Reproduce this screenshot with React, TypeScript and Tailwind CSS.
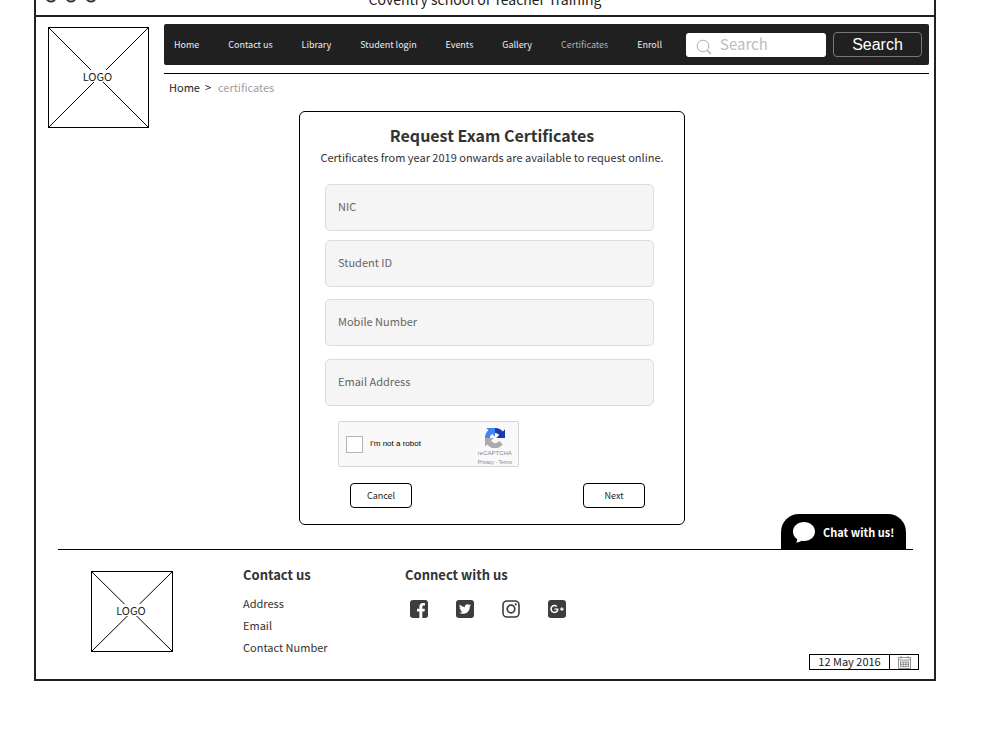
import React from "react";
import { FaFacebookF, FaTwitter, FaGooglePlusG } from "react-icons/fa";

const navItems = ["Home", "Contact us", "Library", "Student login", "Events", "Gallery", "Certificates", "Enroll"];

function Logo({ className }: { className: string }) {
  return (
    <div className={"relative flex shrink-0 items-center justify-center border border-black pr-[2px] pb-1 " + className}>
      <svg className="absolute inset-0 h-full w-full" viewBox="0 0 100 100" preserveAspectRatio="none" aria-hidden="true">
        <path d="M0 0L100 100M100 0L0 100" stroke="#000" strokeWidth="1" vectorEffect="non-scaling-stroke" />
      </svg>
      <span className="relative bg-white text-[11px] leading-3 text-[#222]">LOGO</span>
    </div>
  );
}

function Field({ id, label, type = "text" }: { id: string; label: string; type?: string }) {
  return (
    <input
      id={id}
      type={type}
      aria-label={label}
      placeholder={label}
      className="h-[47px] w-full rounded-[5px] border border-[#dcdcdc] bg-[#f5f5f5] px-3 pb-1 text-[11px] text-[#333] placeholder:text-[#666]"
    />
  );
}

function CaptchaMark() {
  return (
    <svg className="h-5 w-5" viewBox="0 0 64 64" aria-hidden="true">
      <path d="M64 32V4l-7 7A32 32 0 0 0 32 0v16c7 0 11 3 13 7l-9 9z" fill="#1c3aa9" />
      <path d="M32 0H4l7 7A32 32 0 0 0 0 32h16c0-7 3-11 7-13l9 9z" fill="#4285f4" />
      <path d="M0 32v28l7-7a32 32 0 0 0 50 0L45 41c-5 10-19 10-25 0l8-9z" fill="#ababab" />
    </svg>
  );
}

function InstagramMark() {
  return (
    <svg className="h-[18px] w-[18px]" viewBox="0 0 18 18" fill="none" stroke="#3d3d3d" aria-hidden="true">
      <rect x="1" y="1" width="16" height="16" rx="4" strokeWidth="1.6" />
      <circle cx="9" cy="9" r="3.8" strokeWidth="1.7" />
      <circle cx="13.7" cy="4.3" r="1.1" fill="#3d3d3d" stroke="none" />
    </svg>
  );
}

const tile = "flex h-[18px] w-[18px] justify-center rounded-[3px] bg-[#3d3d3d] text-white";

export default function App() {
  return (
    <div className="min-h-screen bg-white pr-16 pl-[34px] font-['Noto_Sans_CJK_SC','Noto_Sans',sans-serif] text-[#333]">
      <div className="border-2 border-t-0 border-[#222]">
        <header className="relative flex h-[17px] items-end justify-center overflow-hidden border-b-2 border-[#222]">
          <svg className="absolute top-0 left-0 h-4 w-20" viewBox="0 0 80 16" fill="none" stroke="#333" strokeWidth="2" aria-hidden="true">
            <circle cx="15" cy="-3" r="4.6" />
            <circle cx="35" cy="-3" r="4.6" />
            <circle cx="55" cy="-3" r="4.6" />
          </svg>
          <h1 className="mb-1 text-[14px] leading-6 text-[#222]">Coventry school of Teacher Training</h1>
        </header>

        <div className="flex items-start gap-[15px] pt-[7px] pr-[5px] pl-3">
          <Logo className="mt-[3px] h-[101px] w-[101px]" />
          <div className="min-w-0 flex-1">
            <nav className="flex h-[41px] items-center rounded-[2px] bg-[#202020] pr-[7px] pl-[10px]">
              <ul className="mr-6 flex flex-1 justify-between text-[9px] leading-4 whitespace-nowrap text-[#eee]">
                {navItems.map((item) => (
                  <li key={item}>
                    <a href="#" className={item === "Certificates" ? "text-[#b0b0b0]" : ""}>{item}</a>
                  </li>
                ))}
              </ul>
              <label className="flex h-6 w-[140px] items-center rounded-[3px] bg-white pl-[10px]">
                <svg className="mt-1 h-4 w-4 shrink-0" viewBox="0 0 16 16" fill="none" stroke="#b0b0b0" aria-hidden="true">
                  <circle cx="7" cy="7" r="5.8" />
                  <path d="M11.2 11.2L15 15" strokeWidth="1.5" />
                </svg>
                <input type="search" aria-label="Search" placeholder="Search" className="ml-2 h-6 w-full min-w-0 bg-transparent pb-[2px] text-[15px] leading-[22px] placeholder:text-[#bdbdbd]" />
              </label>
              <button type="button" className="ml-[7px] h-[25px] w-[89px] rounded-[4px] border border-[#777] font-['Liberation_Sans',sans-serif] text-base leading-5 text-white">Search</button>
            </nav>
            <div className="mt-2 border-t border-black" />
            <div className="mt-[3px] flex gap-[7px] pl-[5px] text-[11px] leading-5">
              <a href="#" className="text-[#222]">Home&nbsp; &gt;</a>
              <span className="text-[#a0a0a0]">certificates</span>
            </div>

            <main className="mt-[14px] ml-[135px] w-[386px] rounded-[6px] border border-black pt-[11px] pb-4">
              <h2 className="text-center text-[16px] leading-6 font-bold">Request Exam Certificates</h2>
              <p className="text-center text-[11px] leading-5 whitespace-nowrap">Certificates from year 2019 onwards are available to request online.</p>
              <form className="mt-[17px] pr-[30px] pl-[25px]">
                <div className="flex flex-col gap-3">
                  <div className="flex flex-col gap-[9px]">
                    <Field id="nic" label="NIC" />
                    <Field id="student" label="Student ID" />
                  </div>
                  <div className="flex flex-col gap-[13px]">
                    <Field id="mobile" label="Mobile Number" type="tel" />
                    <Field id="email" label="Email Address" type="email" />
                  </div>
                </div>
                <div className="mt-[15px] ml-[13px] flex h-[46px] w-[181px] items-center rounded-[2px] border border-[#d6d6d6] bg-[#f9f9f9] pr-[6px] pl-[7px]">
                  <input id="robot" type="checkbox" className="h-[17px] w-[17px] appearance-none border border-[#b5b5b5] bg-white" />
                  <label htmlFor="robot" className="ml-[7px] font-['Liberation_Sans',sans-serif] text-[8px] leading-3 text-black">I'm not a robot</label>
                  <div className="ml-auto flex flex-col items-center pt-1 font-['Liberation_Sans',sans-serif] whitespace-nowrap text-[#888]">
                    <CaptchaMark />
                    <span className="mt-[2px] text-[6px] leading-[6px]">reCAPTCHA</span>
                    <span className="mt-[3px] text-[5px] leading-[6px]">Privacy - Terms</span>
                  </div>
                </div>
                <div className="mt-4 flex justify-between pr-[9px] pl-[25px] text-[9px] leading-4 text-[#222]">
                  <button type="button" className="h-[25px] w-[62px] rounded-[4px] border border-black">Cancel</button>
                  <button type="button" className="h-[25px] w-[62px] rounded-[4px] border border-black">Next</button>
                </div>
              </form>
            </main>
          </div>
        </div>

        <footer className="relative mt-6">
          <button type="button" className="absolute right-7 bottom-full flex h-[35px] w-[125px] items-center rounded-t-[18px] bg-black pt-px pl-3 text-[11px] font-bold whitespace-nowrap text-white">
            <svg className="h-[21px] w-[22px]" viewBox="0 0 22 21" fill="#fff" aria-hidden="true">
              <path d="M11 0C5 0 0 4 0 9.500c0 3.400 1.600 6 4.200 7.700 0 1.500-.4 2.400-1 3.200 2 .1 3.800-.5 5.200-1.700 8 1.200 13.600-3.200 13.600-9.200C22 4 17 0 11 0z" />
            </svg>
            <span className="ml-2">Chat with us!</span>
          </button>
          <div className="mr-[21px] ml-[22px] border-t border-black" />
          <div className="flex items-start pt-[15px] pr-[15px] pb-[9px] pl-[55px]">
            <Logo className="mt-[6px] h-[81px] w-[82px]" />
            <section className="ml-[70px] w-[162px]">
              <h3 className="text-[13px] leading-5 font-bold">Contact us</h3>
              <ul className="mt-[7px] text-[11px] leading-[22px]">
                <li>Address</li>
                <li>Email</li>
                <li>Contact Number</li>
              </ul>
            </section>
            <section>
              <h3 className="text-[13px] leading-5 font-bold">Connect with us</h3>
              <div className="mt-[15px] flex gap-7 pl-[5px]">
                <a href="#" aria-label="Facebook" className={tile + " items-end pl-1"}><FaFacebookF size={15} /></a>
                <a href="#" aria-label="Twitter" className={tile + " items-center"}><FaTwitter size={12} /></a>
                <a href="#" aria-label="Instagram"><InstagramMark /></a>
                <a href="#" aria-label="Google Plus" className={tile + " items-center"}><FaGooglePlusG size={14} /></a>
              </div>
            </section>
            <div className="mt-[89px] ml-auto flex h-4 w-[110px] border border-black text-[11px] leading-3 text-[#222]">
              <time className="flex-1 text-center">12 May 2016</time>
              <button type="button" aria-label="Choose date" className="flex w-[29px] items-center justify-center border-l border-black">
                <svg className="h-[13px] w-[13px]" viewBox="0 0 13 13" fill="none" stroke="#777" strokeWidth="0.8" aria-hidden="true">
                  <path d="M.5 1.500h12v11H.5zM.5 4h12M3 0v2.500M10 0v2.500M2 6h9M2 8.300h9M2 10.600h9M2.500 6v4.600M5.200 6v4.600M7.800 6v4.600M10.500 6v4.600" />
                </svg>
              </button>
            </div>
          </div>
        </footer>
      </div>
    </div>
  );
}
